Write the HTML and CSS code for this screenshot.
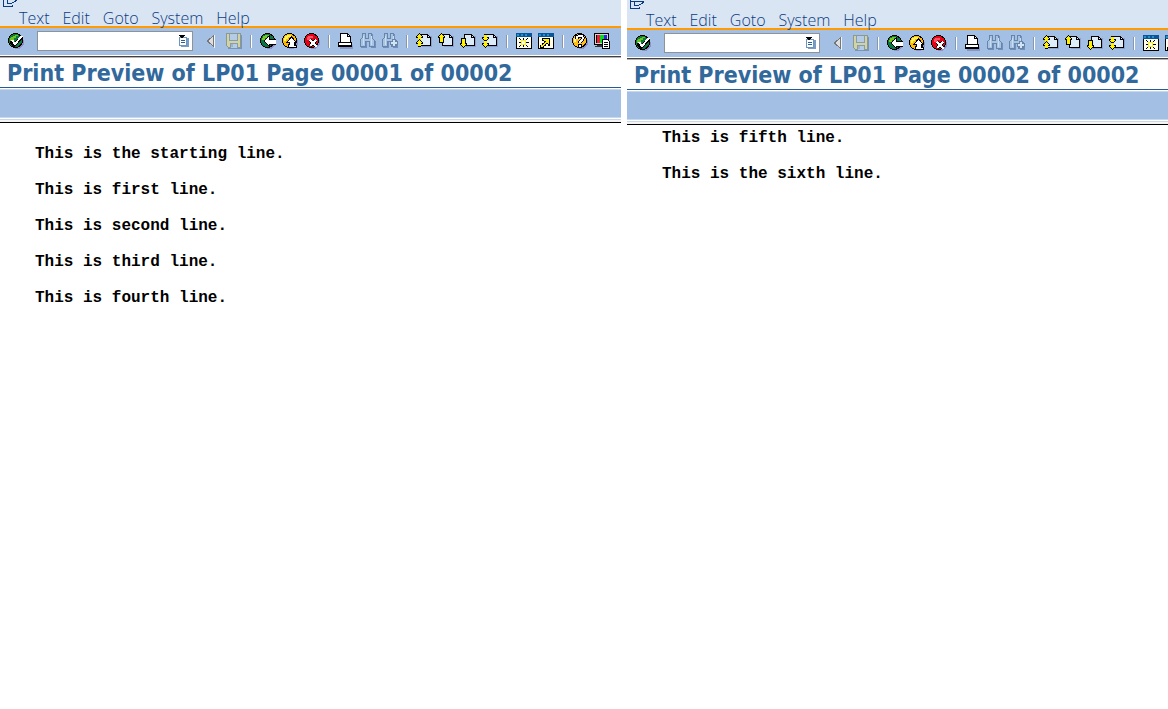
FILE: index.html
```html
<!DOCTYPE html>
<html lang="en">
<head>
<meta charset="utf-8">
<title>Print Preview of LP01</title>
<link rel="stylesheet" href="styles.css">
</head>
<body>
<svg class="sprite" aria-hidden="true">
  <symbol id="i-menu" viewBox="0 0 16 12">
    <path d="M1.500 0V8.500H10.500V6.500M1.500 1.500H15M5.500 2V5.500H9.500L14.500 2.500L11.500 1.500" fill="none" stroke="#0a3c82"/>
  </symbol>
  <symbol id="i-ok" viewBox="0 0 16 16">
    <circle cx="9.500" cy="9.500" r="6.500" fill="#8e8fcb"/>
    <circle cx="7.500" cy="7.500" r="7" fill="#0b7a3b" stroke="#000"/>
    <path d="M3 4h2V3h2V2h3v1H8v2H6v2H4v1H2V5h1z" fill="#6cc51c"/>
    <path d="M3 10v2h2v1h4v-1H5v-2z" fill="#086868"/>
    <path d="M3 8L6 12L14 4" fill="none" stroke="#000" stroke-width="4"/>
    <path d="M4 7L7 11L14 3" fill="none" stroke="#fff" stroke-width="2"/>
  </symbol>
  <symbol id="i-list" viewBox="0 0 10 12">
    <path d="M2 3H10V12H2z" fill="#7b9cc4"/>
    <path d="M.500 2.500H7.500V10.500H.500z" fill="#fff" stroke="#6b94be"/>
    <path d="M2 5H6V6H2zM2 7H6V8H2z" fill="#285f97"/>
    <path d="M0 0H6V1H5V2H4V3H2V2H1V1H0z" fill="#000"/>
  </symbol>
  <symbol id="i-prev" viewBox="0 0 16 16">
    <path d="M10 2V14L2 8z" fill="#777"/>
    <path d="M9 4V12L4 8z" fill="#dedede"/>
    <path d="M10.500 2V15" stroke="#f0f3f7"/>
  </symbol>
  <symbol id="i-save" viewBox="0 0 16 16">
    <path d="M2 2H16V16H2z" fill="#7b93b8"/>
    <path d="M.500 .500H14.500V14.500H2.500L.500 12.500z" fill="#d2d2a2" stroke="#8b9a91"/>
    <path d="M4 1H11V7H4zM4 10H11V15H4z" fill="#b5cce6"/>
    <path d="M3.500 1V7.500H11.500V1M4.500 15V10.500H11.500V15" fill="none" stroke="#879dac"/>
    <path d="M5 11H7V14H5z" fill="#9eb4c7"/>
  </symbol>
  <symbol id="i-back" viewBox="0 0 16 16">
    <circle cx="9.500" cy="9.500" r="6.500" fill="#8e8fcb"/>
    <circle cx="7.500" cy="7.500" r="7" fill="#077644" stroke="#000"/>
    <path d="M3 3H5V2H9V3H7V5H5V7H2V5H3z" fill="#78c719"/>
    <path d="M4 8L9 3V6H16V11H9V13z" fill="#fff" stroke="#000"/>
  </symbol>
  <symbol id="i-exit" viewBox="0 0 16 16">
    <circle cx="9.500" cy="9.500" r="6.500" fill="#8e8fcb"/>
    <circle cx="7.500" cy="7.500" r="7" fill="#ffb900" stroke="#000"/>
    <path d="M3 3H5V2H9V4H6V6H4V8H2V5H3z" fill="#fff45c"/>
    <path d="M9.500 4L14 9H12V12H14V14H6V11H7V9H5z" fill="#fff" stroke="#000"/>
  </symbol>
  <symbol id="i-cancel" viewBox="0 0 16 16">
    <circle cx="9.500" cy="9.500" r="6.500" fill="#8e8fcb"/>
    <circle cx="7.500" cy="7.500" r="7" fill="#e60018" stroke="#000"/>
    <path d="M4 3H9V5H6V7H3V4H4z" fill="#ff5363"/>
    <path d="M6 7L12 13M12 7L6 13" stroke="#000" stroke-width="3"/>
    <path d="M6 7L13 14M12 7L6 13" stroke="#fff" stroke-width="2"/>
  </symbol>
  <symbol id="i-print" viewBox="0 0 16 16">
    <path d="M2 12H15V16H2z" fill="#8596c7"/>
    <path d="M2.500 10V.500H9.500L12.500 3.500V10" fill="#fff" stroke="#000"/>
    <path d="M9.500 1V3.500H12" fill="none" stroke="#000"/>
    <path d="M.500 9.500H13.500V13.500H.500z" fill="#fff" stroke="#000"/>
    <path d="M1 12H13V13H1z" fill="#000"/>
  </symbol>
  <symbol id="i-find" viewBox="0 0 16 16">
    <path d="M3 1H6V5H10V1H13V5L16 9V15H11V9H7V15H1V7L3 5z" fill="#728ebd"/>
    <path d="M2.500 .500H5.500V5.500H8.500V.500H11.500V4.500L14.500 7.500V13.500H9.500V8.500H5.500V13.500H.500V6.500L2.500 4.500z" fill="#a9c3e2" stroke="#6585ab"/>
    <path d="M3.500 3V12M11.500 3V12" stroke="#c8dcf2"/>
  </symbol>
  <symbol id="i-next" viewBox="0 0 16 16">
    <use href="#i-find" width="16" height="16"/>
    <path d="M10.500 6.500H13.500V8.500H15.500V11.500H13.500V13.500H10.500V11.500H8.500V8.500H10.500z" fill="#d4e3f3" stroke="#6585ab"/>
  </symbol>
  <symbol id="i-page" viewBox="0 0 16 16">
    <path d="M6 3H16V14H6z" fill="#8d9fcb"/>
    <path d="M4.500 1.500H11.500L14.500 4.500V12.500H4.500z" fill="#dcecf9" stroke="#000"/>
    <path d="M11.500 1V4.500H14" fill="none" stroke="#000"/>
  </symbol>
  <symbol id="i-up" viewBox="0 0 8 8">
    <path d="M3 0H4V1H5V2H6V3H7V5H5V8H2V5H0V3H1V2H2V1H3z" fill="#000"/>
    <path d="M3 1H4V2H5V3H6V4H5V7H2V4H1V3H2V2H3z" fill="#fff000"/>
  </symbol>
  <symbol id="i-down" viewBox="0 0 8 8">
    <path d="M3 8H4V7H5V6H6V5H7V3H5V0H2V3H0V5H1V6H2V7H3z" fill="#000"/>
    <path d="M3 7H4V6H5V5H6V4H5V1H2V4H1V5H2V6H3z" fill="#fff000"/>
  </symbol>
  <symbol id="i-first" viewBox="0 0 16 16">
    <use href="#i-page" width="16" height="16"/>
    <use href="#i-up" width="8" height="8"/>
    <use href="#i-up" y="6" width="8" height="8"/>
  </symbol>
  <symbol id="i-pageup" viewBox="0 0 16 16">
    <use href="#i-page" width="16" height="16"/>
    <path d="M3 0H4V1H5V2H6V3H7V5H6V10H1V5H0V3H1V2H2V1H3z" fill="#000"/>
    <path d="M3 1H4V2H5V3H6V4H5V9H2V4H1V3H2V2H3z" fill="#fff000"/>
  </symbol>
  <symbol id="i-pagedown" viewBox="0 0 16 16">
    <use href="#i-page" width="16" height="16"/>
    <path d="M3 15H4V14H5V13H6V12H7V10H6V5H1V10H0V12H1V13H2V14H3z" fill="#000"/>
    <path d="M3 14H4V13H5V12H6V11H5V6H2V11H1V12H2V13H3z" fill="#fff000"/>
  </symbol>
  <symbol id="i-last" viewBox="0 0 16 16">
    <use href="#i-page" width="16" height="16"/>
    <use href="#i-down" y="1" width="8" height="8"/>
    <use href="#i-down" y="7" width="8" height="8"/>
  </symbol>
  <symbol id="i-window" viewBox="0 0 16 16">
    <path d="M.500 .500H15.500V15.500H.500z" fill="#fffcea" stroke="#000"/>
    <path d="M0 0H16V4H0z" fill="#07569c"/>
    <path d="M1 1H3V2H5V1H7V2H9V1H11V3H9V2H7V3H5V2H3V3H1z" fill="#2990c5"/>
  </symbol>
  <symbol id="i-session" viewBox="0 0 16 16">
    <use href="#i-window" width="16" height="16"/>
    <path d="M7.500 5V14M3 9.500H13" stroke="#000"/>
    <path d="M3 5H4V6H5V7H6V8H5V7H4V6H3zM12 5H11V6H10V7H9V8H10V7H11V6H12zM3 14H4V13H5V12H6V11H5V12H4V13H3zM12 14H11V13H10V12H9V11H10V12H11V13H12z" fill="#000"/>
    <path d="M5 7H10V12H5z" fill="#fff000"/>
    <path d="M6 8H9V11H6z" fill="#fff"/>
  </symbol>
  <symbol id="i-shortcut" viewBox="0 0 16 16">
    <use href="#i-window" width="16" height="16"/>
    <path d="M4 5H12V13H10V11H8V13H6V15H2V12H4V10H6V8H4z" fill="#000"/>
    <path d="M5 6H11V11H10V10H8V11H7V12H6V13H5V14H3V12H5V11H6V10H7V9H8V8H6V7H5z" fill="#fff000"/>
  </symbol>
  <symbol id="i-help" viewBox="0 0 16 16">
    <circle cx="9.500" cy="9.500" r="6.500" fill="#8e8fcb"/>
    <circle cx="7.500" cy="7.500" r="7" fill="#ffbd18" stroke="#000"/>
    <path d="M3 3H5V2H8V3H5V5H4V9H2V5H3z" fill="#fff47b"/>
    <path d="M5 6V4L7 3H10L11 5L10 7L8 9V10M8 11V14" fill="none" stroke="#000" stroke-width="4"/>
    <path d="M5 6V4L7 3H10L11 5L10 7L8 9V10M8 12V14" fill="none" stroke="#fff" stroke-width="2"/>
  </symbol>
  <symbol id="i-layout" viewBox="0 0 16 16">
    <path d="M.500 .500H14.500V11.500H.500z" fill="#d4d4d4" stroke="#000"/>
    <path d="M2 2H13V10H2z" fill="#000"/>
    <path d="M3 2H6V10H3z" fill="#f01835"/><path d="M6 2H10V10H6z" fill="#00dc24"/><path d="M10 2H13V10H10z" fill="#2525e8"/>
    <path d="M3 12H8V14H1V13H3z" fill="#333"/>
    <path d="M8.500 6.500H13.500L15.500 8.500V15.500H8.500z" fill="#fff" stroke="#000"/>
    <path d="M10 9H14V10H10zM10 11H14V12H10zM10 13H14V14H10z" fill="#000"/>
  </symbol>
</svg>

<main class="previews">
  <section class="window window--first">
    <nav class="menu" aria-label="Menu">
      <button class="menu-corner" aria-label="Window menu"><svg class="corner-icon"><use href="#i-menu"/></svg></button>
      <button>Text</button><button>Edit</button><button>Goto</button><button>System</button><button>Help</button>
    </nav>
    <div class="toolbar">
      <button aria-label="Enter"><svg><use href="#i-ok"/></svg></button>
      <div class="command"><input type="text" aria-label="Command"><button aria-label="Command history"><svg><use href="#i-list"/></svg></button></div>
      <button aria-label="Collapse"><svg><use href="#i-prev"/></svg></button>
      <button aria-label="Save" disabled><svg><use href="#i-save"/></svg></button>
      <span class="sep"></span>
      <button aria-label="Back"><svg><use href="#i-back"/></svg></button>
      <button aria-label="Exit"><svg><use href="#i-exit"/></svg></button>
      <button aria-label="Cancel"><svg><use href="#i-cancel"/></svg></button>
      <span class="sep"></span>
      <button aria-label="Print"><svg><use href="#i-print"/></svg></button>
      <button aria-label="Find" disabled><svg><use href="#i-find"/></svg></button>
      <button aria-label="Find next" disabled><svg><use href="#i-next"/></svg></button>
      <span class="sep"></span>
      <button aria-label="First page"><svg><use href="#i-first"/></svg></button>
      <button aria-label="Previous page"><svg><use href="#i-pageup"/></svg></button>
      <button aria-label="Next page"><svg><use href="#i-pagedown"/></svg></button>
      <button aria-label="Last page"><svg><use href="#i-last"/></svg></button>
      <span class="sep"></span>
      <button aria-label="New session"><svg><use href="#i-session"/></svg></button>
      <button aria-label="Create shortcut"><svg><use href="#i-shortcut"/></svg></button>
      <span class="sep"></span>
      <button aria-label="Help"><svg><use href="#i-help"/></svg></button>
      <button aria-label="Customize layout"><svg><use href="#i-layout"/></svg></button>
    </div>
    <h1 class="title">Print Preview of LP01 Page 00001 of 00002</h1>
    <div class="appbar"></div>
    <pre class="page">

This is the starting line.

This is first line.

This is second line.

This is third line.

This is fourth line.</pre>
  </section>

  <section class="window">
    <nav class="menu" aria-label="Menu">
      <button class="menu-corner" aria-label="Window menu"><svg class="corner-icon"><use href="#i-menu"/></svg></button>
      <button>Text</button><button>Edit</button><button>Goto</button><button>System</button><button>Help</button>
    </nav>
    <div class="toolbar">
      <button aria-label="Enter"><svg><use href="#i-ok"/></svg></button>
      <div class="command"><input type="text" aria-label="Command"><button aria-label="Command history"><svg><use href="#i-list"/></svg></button></div>
      <button aria-label="Collapse"><svg><use href="#i-prev"/></svg></button>
      <button aria-label="Save" disabled><svg><use href="#i-save"/></svg></button>
      <span class="sep"></span>
      <button aria-label="Back"><svg><use href="#i-back"/></svg></button>
      <button aria-label="Exit"><svg><use href="#i-exit"/></svg></button>
      <button aria-label="Cancel"><svg><use href="#i-cancel"/></svg></button>
      <span class="sep"></span>
      <button aria-label="Print"><svg><use href="#i-print"/></svg></button>
      <button aria-label="Find" disabled><svg><use href="#i-find"/></svg></button>
      <button aria-label="Find next" disabled><svg><use href="#i-next"/></svg></button>
      <span class="sep"></span>
      <button aria-label="First page"><svg><use href="#i-first"/></svg></button>
      <button aria-label="Previous page"><svg><use href="#i-pageup"/></svg></button>
      <button aria-label="Next page"><svg><use href="#i-pagedown"/></svg></button>
      <button aria-label="Last page"><svg><use href="#i-last"/></svg></button>
      <span class="sep"></span>
      <button aria-label="New session"><svg><use href="#i-session"/></svg></button>
      <button aria-label="Create shortcut"><svg><use href="#i-shortcut"/></svg></button>
    </div>
    <h1 class="title">Print Preview of LP01 Page 00002 of 00002</h1>
    <div class="appbar"></div>
    <pre class="page">This is fifth line.

This is the sixth line.</pre>
  </section>
</main>
</body>
</html>
```
FILE: styles.css
```css
* { box-sizing: border-box; }
body { margin: 0; background: #fff; }
.sprite { position: absolute; width: 0; height: 0; }
button { padding: 0; border: 0; background: none; color: inherit; font: inherit; flex: none; }
svg { display: block; shape-rendering: crispEdges; }

.previews { display: grid; grid-template-columns: 621fr 541fr; gap: 6px; min-height: 100vh; }
.window { min-width: 0; overflow: hidden; }

.menu {
  position: relative;
  display: flex;
  gap: 13px;
  padding: 12px 19px 0;
  background: #dae5f3;
  border-bottom: 2px solid #ff9a00;
  color: #0a3c82;
  font: 300 16px/16px "Open Sans", "Noto Sans", sans-serif;
}
.window--first .menu { padding-top: 10px; }
.menu-corner { position: absolute; left: 2px; top: 0; }
.window--first .menu-corner { top: -2px; }
.corner-icon { width: 16px; height: 12px; }

.toolbar {
  display: flex;
  align-items: center;
  gap: 6px;
  height: 27px;
  padding: 0 0 1px 8px;
  background: #a3c0e4;
}
.toolbar svg { width: 16px; height: 16px; }
.sep { flex: none; width: 2px; height: 13px; margin: 0 2px; background: #8997aa; border-right: 1px solid #fff; }
.command {
  display: flex;
  align-items: center;
  flex: none;
  width: 156px;
  height: 20px;
  margin: 0 5px 0 7px;
  padding-right: 3px;
  background: #fff;
  border: 1px solid #8f9398;
}
.command input { flex: 1; min-width: 0; height: 18px; padding: 0 4px; border: 0; outline: 0; background: none; font: 14px "Open Sans", sans-serif; }
.toolbar .command svg { width: 10px; height: 12px; }

.title {
  margin: 0;
  padding: 3px 0 0 7px;
  border-top: 1px solid #fff;
  border-bottom: 1px solid #285b8f;
  box-shadow: inset 0 1px #404040, inset 0 2px #b8b4b4;
  color: #31699c;
  font: bold 23px/28px "DejaVu Sans Condensed", "Noto Sans", sans-serif;
  white-space: nowrap;
}
.appbar {
  height: 34px;
  margin-top: 1px;
  background: linear-gradient(#c8d8ec 0 1px, #a3c0e4 1px 28px, #c8d8ec 28px 29px, #fff 29px 30px, #c8d8e8 30px 31px, #f4f4f4 31px 33px, #000 33px);
}
.page {
  margin: 0;
  padding: 4px 35px;
  font: bold 16px/18px "Liberation Mono", monospace;
}
```
